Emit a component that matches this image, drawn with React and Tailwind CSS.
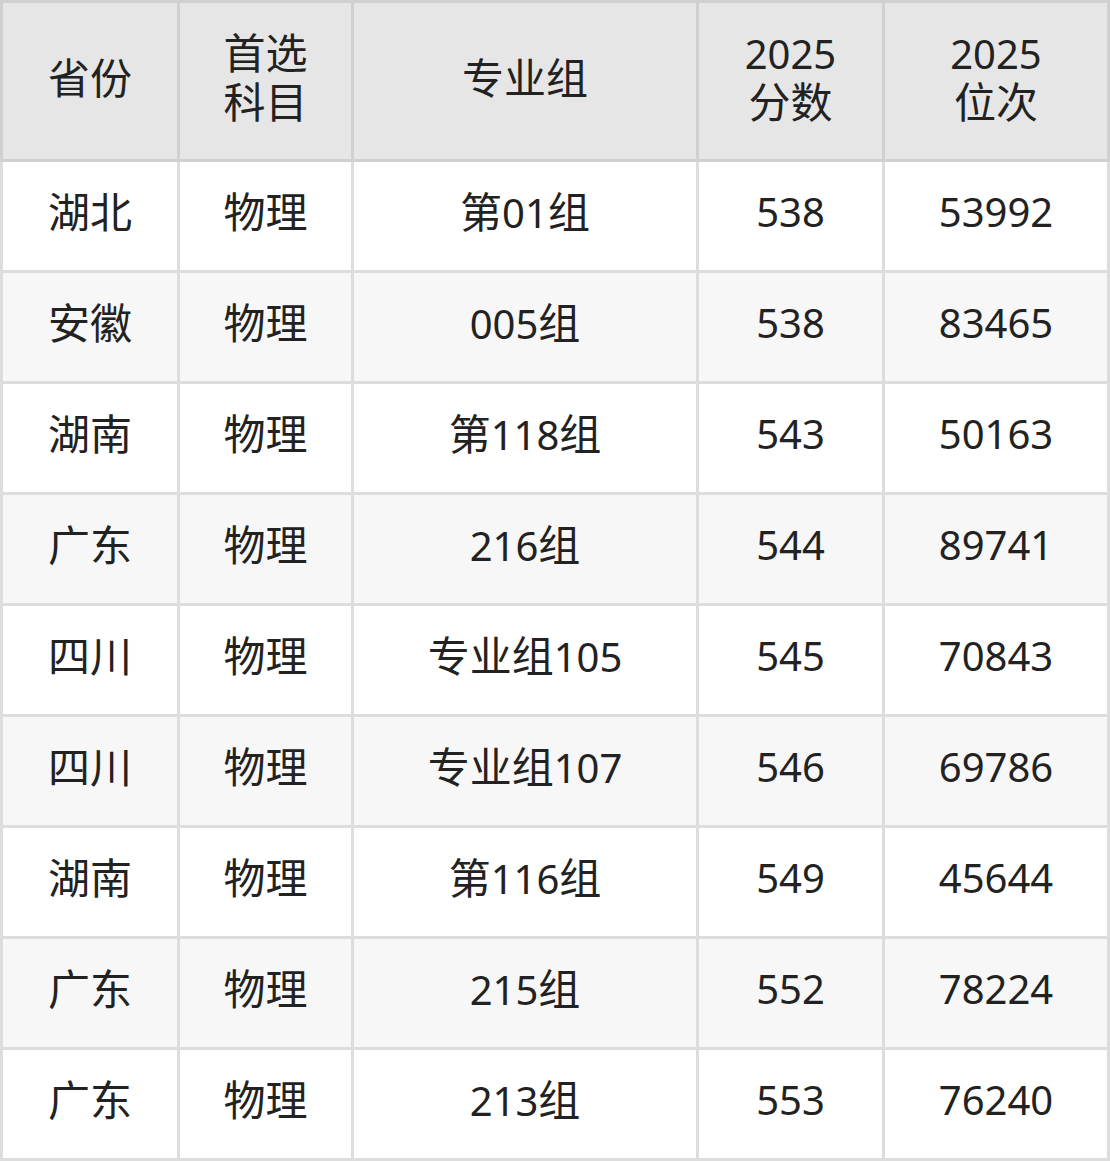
function Txt({ s }) {
  const parts = s.match(/[\u4e00-\u9fff]+|[^\u4e00-\u9fff]+/g) || [];
  return (
    <span>
      {parts.map((p, i) =>
        /[\u4e00-\u9fff]/.test(p) ? (
          <span key={i} className="text-[42px]">{p}</span>
        ) : (
          <span key={i}>{p}</span>
        )
      )}
    </span>
  );
}

export default function App() {
  const widths = ["w-[174px]", "w-[171px]", "w-[342px]", "w-[183px]", "w-[222px]"];
  const header = [["省份"], ["首选", "科目"], ["专业组"], ["2025", "分数"], ["2025", "位次"]];
  const rows = [
    ["湖北", "物理", "第01组", "538", "53992"],
    ["安徽", "物理", "005组", "538", "83465"],
    ["湖南", "物理", "第118组", "543", "50163"],
    ["广东", "物理", "216组", "544", "89741"],
    ["四川", "物理", "专业组105", "545", "70843"],
    ["四川", "物理", "专业组107", "546", "69786"],
    ["湖南", "物理", "第116组", "549", "45644"],
    ["广东", "物理", "215组", "552", "78224"],
    ["广东", "物理", "213组", "553", "76240"],
  ];
  return (
    <div
      className="w-[1110px] text-[40px] text-[#222222]"
      style={{ fontFamily: '"Noto Sans", "Noto Sans CJK SC", sans-serif' }}
    >
      <div className="flex gap-[3px] bg-[#d0d0d0] p-[3px]">
        {header.map((lines, i) => (
          <div
            key={i}
            className={`${widths[i]} h-[156px] bg-[#e6e6e6] flex flex-col items-center justify-center leading-[48px] pb-[6px]`}
          >
            {lines.map((l, j) => (
              <div key={j}>
                <Txt s={l} />
              </div>
            ))}
          </div>
        ))}
      </div>
      <div className="flex flex-col gap-[3px] bg-[#dddddd] px-[3px] pb-[3px]">
        {rows.map((r, ri) => (
          <div key={ri} className="flex gap-[3px]">
            {r.map((c, ci) => (
              <div
                key={ci}
                className={`${widths[ci]} h-[108px] ${ri % 2 === 1 ? "bg-[#f7f7f7]" : "bg-white"} flex items-center justify-center leading-[45px] pb-[9px]`}
              >
                <Txt s={c} />
              </div>
            ))}
          </div>
        ))}
      </div>
    </div>
  );
}
